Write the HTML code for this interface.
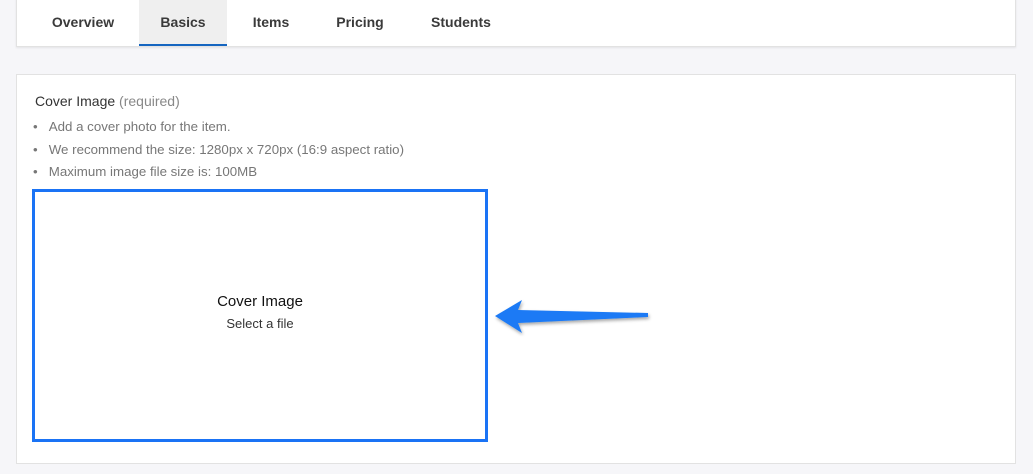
<!DOCTYPE html>
<html><head><style>
body{margin:0;width:1033px;height:474px;background:#f6f6f9;font-family:"Liberation Sans",sans-serif;position:relative;overflow:hidden}
.tabs{position:absolute;left:16px;top:-2px;width:998px;height:48px;background:#fff;border:1px solid #e2e2e2;border-top:none;box-shadow:0 1px 2px rgba(0,0,0,.08)}
.tab{position:absolute;top:0;height:48px;line-height:48px;font-size:14px;font-weight:bold;color:#3a3a3a;text-align:center}
.card{position:absolute;left:16px;top:74px;width:998px;height:388px;background:#fff;border:1px solid #e2e2e2}
.t{position:absolute;font-size:13.3px;color:#777}
.box{position:absolute;left:32px;top:189px;width:450px;height:247px;border:3px solid #1a73f5;background:#fff}
</style></head><body>
<div class="tabs">
<div class="tab" style="left:14px;width:104px">Overview</div>
<div class="tab" style="left:122px;width:88px;background:#efefef;border-bottom:2px solid #1565c0;height:46px;line-height:48px">Basics</div>
<div class="tab" style="left:214px;width:80px">Items</div>
<div class="tab" style="left:302px;width:82px">Pricing</div>
<div class="tab" style="left:402px;width:84px">Students</div>
</div>
<div class="card"></div>
<div class="t" style="left:35px;top:93px;color:#333;font-size:14px">Cover Image <span style="color:#888">(required)</span></div>
<div class="t" style="left:33px;top:119px">•&nbsp;&nbsp;&nbsp;Add a cover photo for the item.</div>
<div class="t" style="left:33px;top:142px">•&nbsp;&nbsp;&nbsp;We recommend the size: 1280px x 720px (16:9 aspect ratio)</div>
<div class="t" style="left:33px;top:164px">•&nbsp;&nbsp;&nbsp;Maximum image file size is: 100MB</div>
<div class="box"></div>
<div style="position:absolute;left:32px;width:456px;top:293px;text-align:center;font-size:15px;color:#111">Cover Image</div>
<div style="position:absolute;left:32px;width:456px;top:316px;text-align:center;font-size:13px;color:#333">Select a file</div>
<svg style="position:absolute;left:0;top:0" width="1033" height="474">
<defs><filter id="s"><feDropShadow dx="1" dy="2" stdDeviation="1.5" flood-opacity="0.35"/></filter></defs>
<path d="M495 316 L522 300 L518 310 L648 313 L648 317 L518 323 L522 333 Z" fill="#1a7af5" filter="url(#s)"/>
</svg>
</body></html>
